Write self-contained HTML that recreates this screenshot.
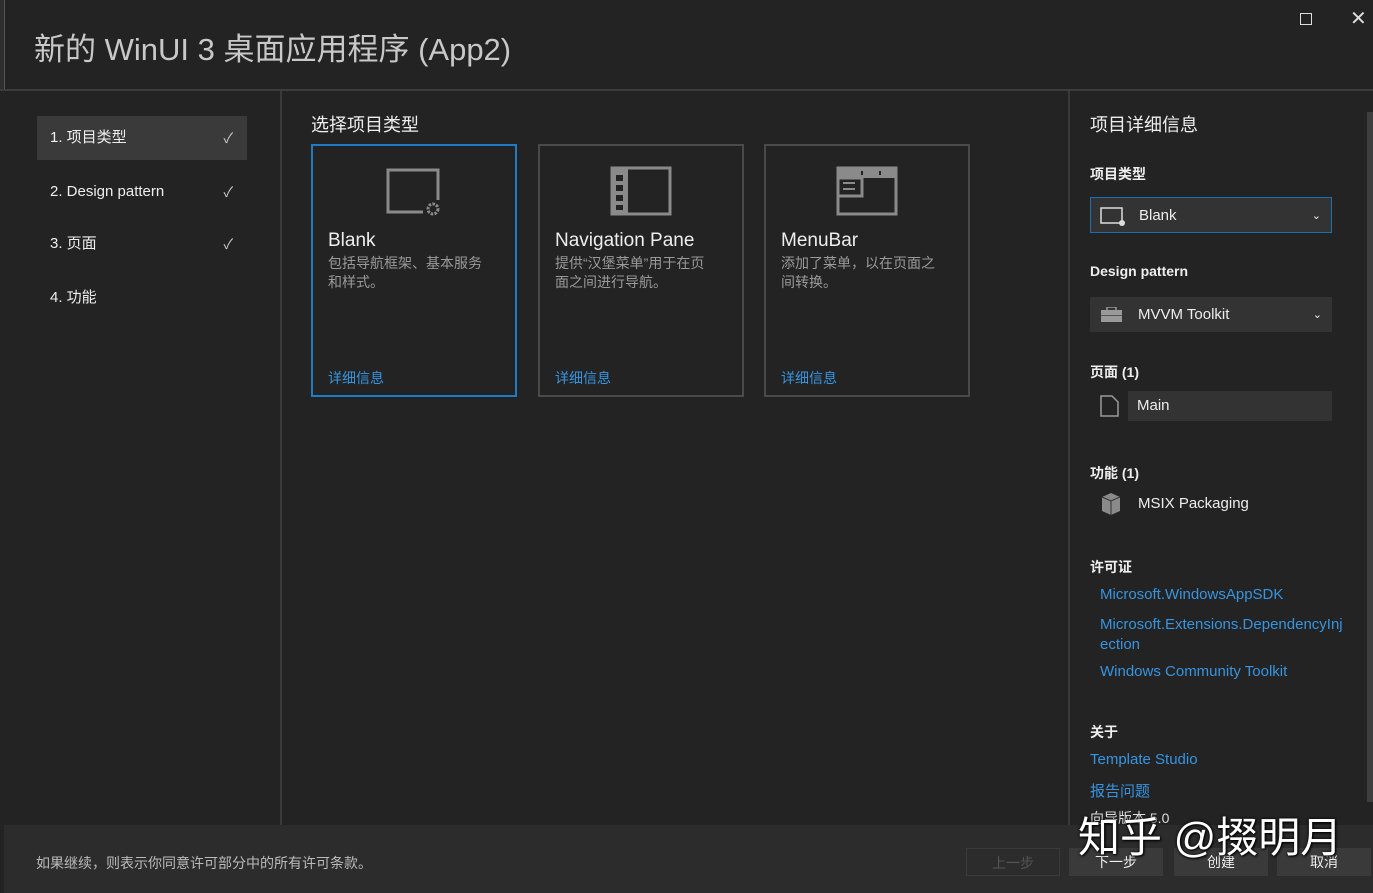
<!DOCTYPE html>
<html><head><meta charset="utf-8"><style>
*{margin:0;padding:0;box-sizing:border-box}
body{width:1373px;height:893px;background:#232323;position:relative;overflow:hidden;font-family:"Liberation Sans","Noto Sans CJK SC",sans-serif;color:#e6e6e6}
.a{position:absolute}
.link{color:#3794e0}
.card{position:absolute;top:144px;width:206px;height:253px;border:2px solid #4a4a4a}
.card .t{position:absolute;left:15px;top:84px;font-size:19px;color:#eee}
.card .d{position:absolute;left:15px;top:108px;font-size:14px;color:#9a9a9a;line-height:19px;width:160px}
.card .l{position:absolute;left:15px;top:222px;font-size:14px;color:#3794e0}
.nav{position:absolute;left:37px;width:210px;height:44px;font-size:15px;line-height:44px;padding-left:13px;color:#eee}
.nav .c{position:absolute;right:14px;top:0;font-size:14px;color:#ccc}
.h{position:absolute;left:1090px;font-size:14px;font-weight:bold;color:#eee}
.box{position:absolute;left:1090px;width:242px;height:36px;background:#333;font-size:15px;line-height:36px;padding-left:48px;color:#eee}
.btn{position:absolute;top:848px;width:94px;height:28px;background:#3a3a3a;font-size:14px;line-height:28px;text-align:center;color:#eee}
</style></head><body>
<div class="a" style="left:0;top:0;width:5px;height:90px;background:#2e2e2e"></div>
<div class="a" style="left:4px;top:0;width:1px;height:90px;background:#555"></div>
<div class="a" style="left:34px;top:24px;font-size:31px;color:#c8c8c8">新的 WinUI 3 桌面应用程序 (App2)</div>
<div class="a" style="left:1300px;top:13px;width:12px;height:12px;border:1.5px solid #ddd"></div>
<div class="a" style="left:1350px;top:6px;font-size:20px;color:#ddd">✕</div>
<div class="a" style="left:0;top:89px;width:1373px;height:2px;background:#3c3c3c"></div>
<div class="a" style="left:280px;top:91px;width:2px;height:734px;background:#3a3a3a"></div>
<div class="a" style="left:1068px;top:91px;width:2px;height:734px;background:#3a3a3a"></div>
<div class="a" style="left:1367px;top:112px;width:6px;height:690px;background:#3e3e3e"></div>

<div class="nav" style="top:116px;background:#3a3a3a">1. 项目类型<span class="c">✓</span></div>
<div class="nav" style="top:170px">2. Design pattern<span class="c">✓</span></div>
<div class="nav" style="top:222px">3. 页面<span class="c">✓</span></div>
<div class="nav" style="top:276px">4. 功能</div>

<div class="a" style="left:311px;top:111px;font-size:18px;color:#eee">选择项目类型</div>
<div class="card" style="left:311px;border-color:#1f7cc4">
<svg class="a" style="left:72px;top:22px" width="60" height="50"><rect x="3" y="2" width="50" height="42" fill="none" stroke="#8a8a8a" stroke-width="3"/><rect x="38" y="32" width="20" height="18" fill="#232323"/><circle cx="48" cy="41" r="5" fill="none" stroke="#8a8a8a" stroke-width="3" stroke-dasharray="2.5 1.3"/></svg>
<div class="t">Blank</div><div class="d">包括导航框架、基本服务和样式。</div><div class="l">详细信息</div></div>
<div class="card" style="left:538px">
<svg class="a" style="left:70px;top:20px" width="64" height="52"><rect x="2" y="2" width="58" height="46" fill="none" stroke="#8a8a8a" stroke-width="3"/><rect x="2" y="2" width="16" height="46" fill="#8a8a8a"/><rect x="6" y="9" width="7" height="6" fill="#232323"/><rect x="6" y="19" width="7" height="6" fill="#232323"/><rect x="6" y="29" width="7" height="6" fill="#232323"/><rect x="6" y="39" width="7" height="5" fill="#232323"/></svg>
<div class="t">Navigation Pane</div><div class="d">提供“汉堡菜单”用于在页面之间进行导航。</div><div class="l">详细信息</div></div>
<div class="card" style="left:764px">
<svg class="a" style="left:70px;top:20px" width="64" height="52"><rect x="2" y="2" width="58" height="46" fill="none" stroke="#8a8a8a" stroke-width="3"/><rect x="2" y="2" width="58" height="10" fill="#8a8a8a"/><rect x="25" y="5" width="2" height="4" fill="#232323"/><rect x="43" y="5" width="2" height="4" fill="#232323"/><rect x="2" y="12" width="24" height="18" fill="none" stroke="#8a8a8a" stroke-width="3"/><rect x="7" y="16" width="12" height="2" fill="#8a8a8a"/><rect x="7" y="22" width="12" height="2" fill="#8a8a8a"/></svg>
<div class="t">MenuBar</div><div class="d">添加了菜单，以在页面之间转换。</div><div class="l">详细信息</div></div>

<div class="a" style="left:1090px;top:111px;font-size:18px;color:#eee">项目详细信息</div>
<div class="h" style="top:164px">项目类型</div>
<div class="box" style="top:197px;border:1px solid #1f6fb0">Blank<span class="a" style="right:10px;top:0;font-size:11px">⌄</span>
<svg class="a" style="left:9px;top:9px" width="26" height="20"><rect x="1" y="1" width="21" height="15" fill="none" stroke="#ddd" stroke-width="1.5"/><circle cx="22" cy="16" r="3" fill="#ddd"/></svg></div>
<div class="h" style="top:263px">Design pattern</div>
<div class="box" style="top:297px;height:35px">MVVM Toolkit<span class="a" style="right:10px;top:0;font-size:11px">⌄</span>
<svg class="a" style="left:10px;top:10px" width="24" height="16"><rect x="1" y="3" width="21" height="12" fill="#999"/><rect x="7" y="0" width="9" height="4" fill="none" stroke="#999" stroke-width="1.5"/><rect x="1" y="8" width="21" height="1" fill="#555"/></svg></div>
<div class="h" style="top:362px">页面 (1)</div>
<svg class="a" style="left:1100px;top:395px" width="20" height="22"><path d="M1 1H12L18 7V21H1Z" fill="none" stroke="#999" stroke-width="1.5"/></svg>
<div class="a" style="left:1128px;top:391px;width:204px;height:30px;background:#333;font-size:15px;line-height:30px;padding-left:9px;color:#eee">Main</div>
<div class="h" style="top:463px">功能 (1)</div>
<svg class="a" style="left:1099px;top:491px" width="24" height="26"><path d="M3 6L12 2L21 6V20L12 24L3 20Z" fill="#8a8a8a"/><path d="M3 6L12 10L21 6" stroke="#333" fill="none"/><path d="M12 10V24" stroke="#333"/></svg>
<div class="a" style="left:1138px;top:495px;font-size:15px;color:#eee">MSIX Packaging</div>
<div class="h" style="top:557px">许可证</div>
<div class="a link" style="left:1100px;top:586px;font-size:15px">Microsoft.WindowsAppSDK</div>
<div class="a link" style="left:1100px;top:615px;font-size:15px;width:250px;line-height:20px;word-break:break-all">Microsoft.Extensions.DependencyInjection</div>
<div class="a link" style="left:1100px;top:663px;font-size:15px">Windows Community Toolkit</div>
<div class="h" style="top:722px">关于</div>
<div class="a link" style="left:1090px;top:751px;font-size:15px">Template Studio</div>
<div class="a link" style="left:1090px;top:780px;font-size:15px">报告问题</div>
<div class="a" style="left:1090px;top:808px;font-size:14px;color:#ddd">向导版本 5.0</div>

<div class="a" style="left:4px;top:825px;width:1369px;height:68px;background:#2c2c2c"></div>
<div class="a" style="left:36px;top:853px;font-size:14px;color:#bbb">如果继续，则表示你同意许可部分中的所有许可条款。</div>
<div class="btn" style="left:966px;background:#2c2c2c;border:1px solid #3a3a3a;color:#555">上一步</div>
<div class="btn" style="left:1069px">下一步</div>
<div class="btn" style="left:1174px">创建</div>
<div class="btn" style="left:1277px">取消</div>
<div class="a" style="left:1078px;top:804px;font-size:42px;color:#fff;text-shadow:0 0 3px #000,1px 1px 2px #000">知乎 @掇明月</div>
</body></html>
